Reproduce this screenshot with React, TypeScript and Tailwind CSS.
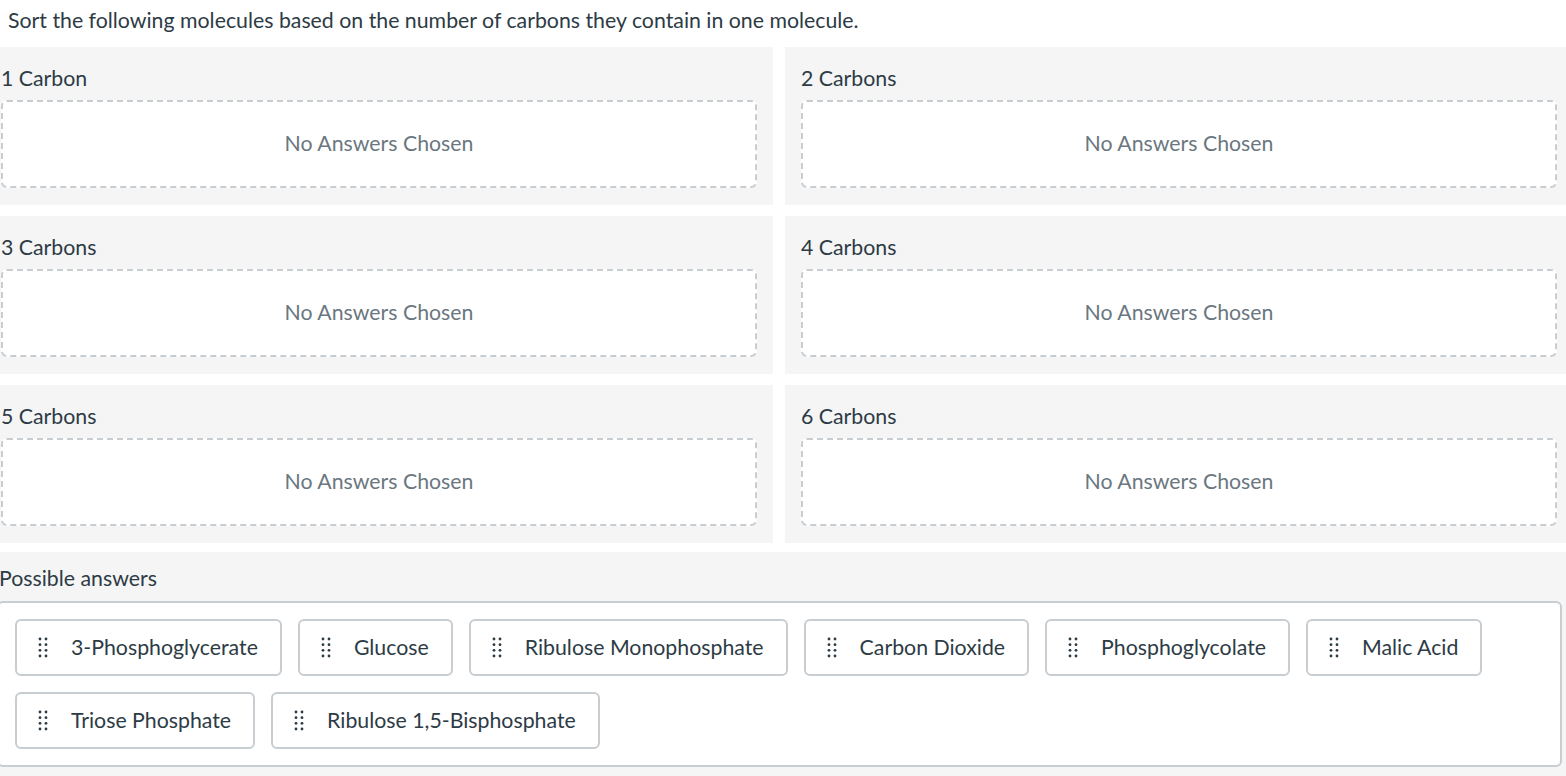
const CATEGORIES = ["1 Carbon", "2 Carbons", "3 Carbons", "4 Carbons", "5 Carbons", "6 Carbons"];

const ANSWERS = [
  "3-Phosphoglycerate",
  "Glucose",
  "Ribulose Monophosphate",
  "Carbon Dioxide",
  "Phosphoglycolate",
  "Malic Acid",
  "Triose Phosphate",
  "Ribulose 1,5-Bisphosphate",
];

function DragHandle() {
  return (
    <svg width="10" height="21" viewBox="0 0 10 21" aria-hidden="true" className="shrink-0">
      {[2, 7.7, 13.3, 19].map((cy) => (
        <g key={cy} fill="#2D3B45">
          <circle cx="2" cy={cy} r="1.4" />
          <circle cx="8" cy={cy} r="1.4" />
        </g>
      ))}
    </svg>
  );
}

function Category({ label }: { label: string }) {
  return (
    <div className="bg-[#F5F5F5] px-[16px] pt-[16px] pb-[17px]">
      <div className="leading-[30px]">{label}</div>
      <div className="mt-[7px] h-[88px] flex items-center justify-center bg-white border-2 border-dashed border-[#C7CDD1] rounded-[6px] text-[#6B7780]">
        No Answers Chosen
      </div>
    </div>
  );
}

export default function App() {
  return (
    <div
      className="w-[1566px] h-[776px] overflow-hidden bg-white text-[21.3px] text-[#2D3B45]"
      style={{ fontFamily: "Lato, 'Open Sans', sans-serif" }}
    >
      <p className="pl-[8px] pt-[5px] leading-[30px]">
        Sort the following molecules based on the number of carbons they contain in one molecule.
      </p>

      <div className="-ml-[15px] w-[1588px] mt-[12px]">
        <div className="grid grid-cols-2 gap-x-[12px] gap-y-[11px]">
          {CATEGORIES.map((c) => (
            <Category key={c} label={c} />
          ))}
        </div>

        {/* Possible answers */}
        <div className="mt-[9px] bg-[#F5F5F5] pl-[12px] pr-[11px] pt-[11px] pb-[16px]">
          <div className="pl-[2px] leading-[30px]">Possible answers</div>
          <div className="mt-[8px] bg-white border-2 border-[#C7CDD1] rounded-[6px] p-[16px] flex flex-wrap gap-x-[16px] gap-y-[16px]">
            {ANSWERS.map((a) => (
              <div
                key={a}
                className="h-[57px] flex items-center gap-[23px] pl-[21px] pr-[22px] border-2 border-[#C7CDD1] rounded-[6px] bg-white"
              >
                <DragHandle />
                <span className="whitespace-nowrap">{a}</span>
              </div>
            ))}
          </div>
        </div>
      </div>
    </div>
  );
}
